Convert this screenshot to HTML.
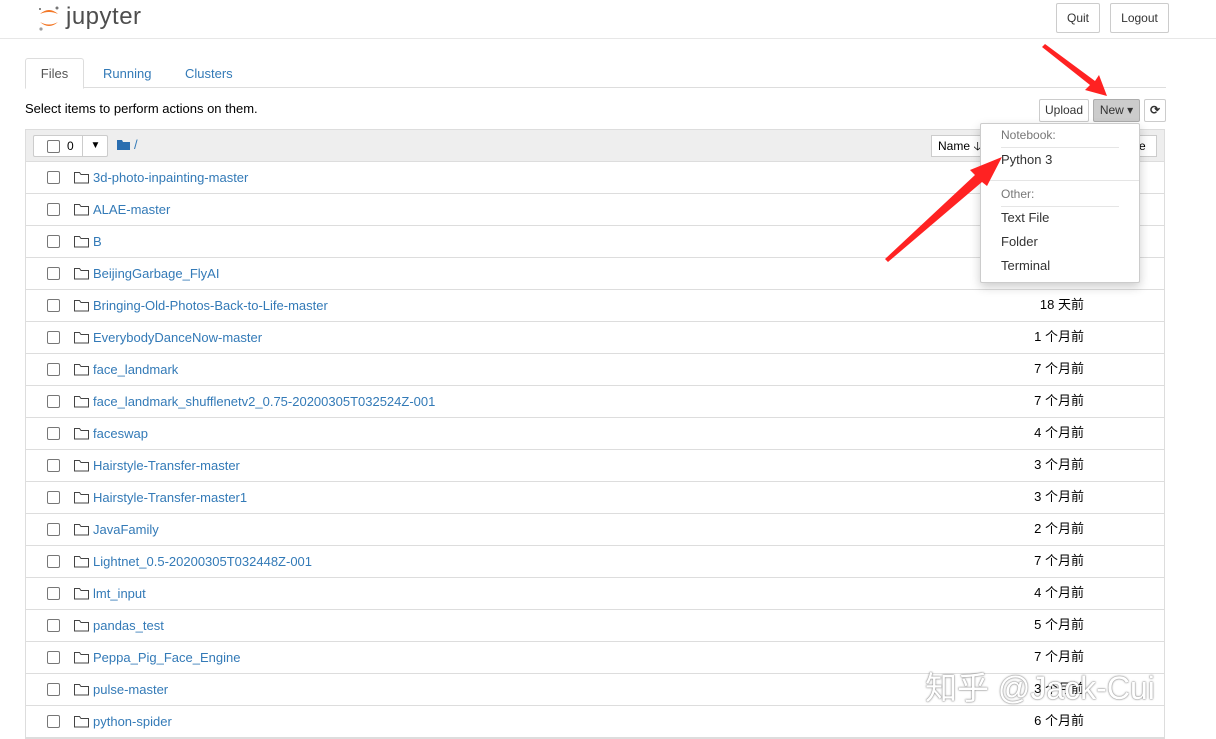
<!DOCTYPE html>
<html><head><meta charset="utf-8"><style>
*{box-sizing:border-box}
body{margin:0;width:1216px;height:738px;overflow:hidden;background:#fff;font-family:"Liberation Sans","Noto Sans CJK SC",sans-serif;font-size:13px;color:#000;position:relative}
.hdr{position:absolute;left:0;top:0;width:1216px;height:39px;border-bottom:1px solid #e7e7e7}
.btn{position:absolute;border:1px solid #ccc;border-radius:2px;background:#fff;font-size:12px;color:#333;text-align:center}
.tabs{position:absolute;left:25px;top:58px;width:1141px;height:30px;border-bottom:1px solid #ddd}
.tab{position:absolute;top:1px;height:30px;line-height:30px;font-size:13px;color:#337ab7}
.list{position:absolute;left:25px;top:129px;width:1140px;border:1px solid #ddd}
.head{height:32px;background:#eee;border-bottom:1px solid #ddd;position:relative}
.row{height:32px;border-bottom:1px solid #ddd;position:relative}
.cb{position:absolute;left:21px;top:9px;width:13px;height:13px;border:1px solid #777;border-radius:2px;background:#fff}
.fold{position:absolute;left:48px;top:9px}
.nm{position:absolute;left:67px;top:8px;color:#337ab7;font-size:13px;line-height:15px}
.dt{position:absolute;right:80px;top:7px;font-size:13px;line-height:15px;color:#000}
.menu{position:absolute;left:980px;top:123px;width:160px;height:160px;background:#fff;border:1px solid #ccc;border-radius:2px;box-shadow:0 4px 10px rgba(0,0,0,.2)}
.menu div{position:absolute;left:20px;font-size:13px;color:#333}
.menu .g{color:#777;font-size:12px}
.menu hr{position:absolute;left:20px;width:118px;margin:0;border:0;border-top:1px solid #e5e5e5}
</style></head><body>
<div class="hdr">
<svg style="position:absolute;left:36px;top:3px" width="26" height="30" viewBox="0 0 26 30">
<path d="M4 11 Q13 3 22 11 Q13 7 4 11Z" fill="#f37726"/>
<path d="M4 19 Q13 27 22 19 Q13 24 4 19Z" fill="#f37726"/>
<circle cx="21" cy="5" r="1.5" fill="#767677"/><circle cx="5" cy="26" r="1.6" fill="#9e9e9e"/><circle cx="4" cy="6" r="1" fill="#616262"/>
</svg>
<div style="position:absolute;left:66px;top:3px;font-size:24px;line-height:28px;color:#4e4e4e;letter-spacing:0.5px">jupyter</div>
<div class="btn" style="left:1056px;top:3px;width:44px;height:30px;line-height:28px">Quit</div>
<div class="btn" style="left:1110px;top:3px;width:59px;height:30px;line-height:28px">Logout</div>
</div>
<div class="tabs">
<div class="tab" style="left:0;top:0;height:31px;width:59px;border:1px solid #ddd;border-bottom-color:#fff;background:#fff;color:#555;text-align:center;border-radius:3px 3px 0 0">Files</div>
<div class="tab" style="left:78px">Running</div>
<div class="tab" style="left:160px">Clusters</div>
</div>
<div style="position:absolute;left:25px;top:101px;font-size:13px;color:#000">Select items to perform actions on them.</div>
<div class="btn" style="left:1039px;top:99px;width:50px;height:23px;line-height:21px">Upload</div>
<div class="btn" style="left:1093px;top:99px;width:47px;height:23px;line-height:21px;background:#ccc;border-color:#adadad">New ▾</div>
<div class="btn" style="left:1144px;top:99px;width:22px;height:23px;line-height:21px;font-weight:bold">⟳</div>
<div class="list">
<div class="head">
<div style="position:absolute;left:7px;top:5px;width:75px;height:22px;border:1px solid #ccc;background:#fff;border-radius:2px"><div class="cb" style="left:13px;top:4px"></div><span style="position:absolute;left:33px;top:3px;font-size:12px">0</span><div style="position:absolute;left:48px;top:0;width:26px;height:20px;border-left:1px solid #ccc;text-align:center;font-size:10px;line-height:20px">▼</div></div>
<svg style="position:absolute;left:91px;top:9px" width="13" height="11"><path d="M0 1h5l1 2h7v8H0z" fill="#2a6eb0"/></svg>
<span style="position:absolute;left:108px;top:7px;color:#337ab7">/</span>
<div style="position:absolute;left:905px;top:5px;width:60px;height:22px;border:1px solid #ccc;background:#fff;font-size:12px;line-height:20px;padding-left:6px">Name 🡣</div>
<div style="position:absolute;left:1100px;top:5px;width:31px;height:22px;border:1px solid #ccc;background:#fff;font-size:12px;line-height:20px;padding-left:6px">ze</div>
</div>
<div id="rows"></div>
</div>
<div class="menu">
<div class="g" style="top:4px">Notebook:</div><hr style="top:23px">
<div style="top:28px">Python 3</div><hr style="top:56px;left:0;width:158px">
<div class="g" style="top:63px">Other:</div><hr style="top:82px">
<div style="top:86px">Text File</div><div style="top:110px">Folder</div><div style="top:134px">Terminal</div>
</div>
<svg style="position:absolute;left:0;top:0" width="1216" height="738">
<polygon points="1042,47 1045,44 1095,81 1099,75 1107,96 1085,90 1090,85" fill="#f22"/>
<polygon points="888,262 885,259 975,175 970,170 1002,157 987,186 982,182" fill="#f22"/>
</svg>
<div style="position:absolute;left:925px;top:670px;font-size:32px;line-height:36px;color:#fff;text-shadow:0 0 2px #888,0 0 1px #666;letter-spacing:0px">知乎 @Jack-Cui</div>
<script>
var d=[["3d-photo-inpainting-master",""],["ALAE-master",""],["B",""],["BeijingGarbage_FlyAI",""],["Bringing-Old-Photos-Back-to-Life-master","18 天前"],["EverybodyDanceNow-master","1 个月前"],["face_landmark","7 个月前"],["face_landmark_shufflenetv2_0.75-20200305T032524Z-001","7 个月前"],["faceswap","4 个月前"],["Hairstyle-Transfer-master","3 个月前"],["Hairstyle-Transfer-master1","3 个月前"],["JavaFamily","2 个月前"],["Lightnet_0.5-20200305T032448Z-001","7 个月前"],["lmt_input","4 个月前"],["pandas_test","5 个月前"],["Peppa_Pig_Face_Engine","7 个月前"],["pulse-master","3 个月前"],["python-spider","6 个月前"]];
var h="";d.forEach(function(r){h+='<div class="row"><div class="cb"></div><svg class="fold" width="15" height="13"><path d="M.5 1.5h5l1.5 2h7.5v8.5H.5z" fill="none" stroke="#444"/></svg><span class="nm">'+r[0]+'</span><span class="dt">'+r[1]+'</span></div>'});
document.getElementById("rows").innerHTML=h;
</script>
</body></html>
